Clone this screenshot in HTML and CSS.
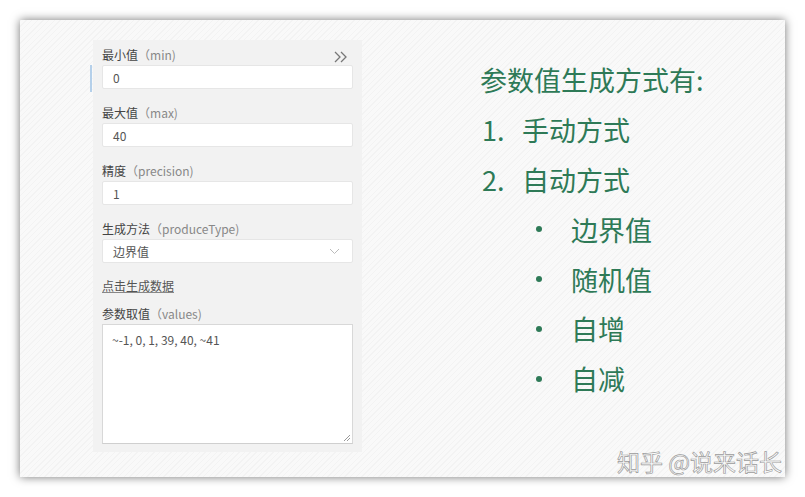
FILE: index.html
```html
<!DOCTYPE html>
<html lang="zh-CN">
<head>
  <meta charset="UTF-8">
  <title>参数值生成方式</title>
  <link rel="stylesheet" href="styles.css">
</head>
<body>

  <div class="slide">

    <div class="panel">
      <div class="label">最小值<span class="en">（min)</span>
        <svg class="collapse" width="14" height="12" viewBox="0 0 14 12">
          <path d="M1 1 L6 6 L1 11 M7 1 L12 6 L7 11" fill="none" stroke="#777" stroke-width="1.3"/>
        </svg>
      </div>
      <div class="input focused">0</div>

      <div class="label">最大值<span class="en">（max)</span></div>
      <div class="input">40</div>

      <div class="label">精度<span class="en">（precision)</span></div>
      <div class="input">1</div>

      <div class="label">生成方法<span class="en">（produceType)</span></div>
      <div class="input select">边界值
        <svg width="11" height="7" viewBox="0 0 11 7">
          <path d="M1 1 L5.5 5.5 L10 1" fill="none" stroke="#bbb" stroke-width="1"/>
        </svg>
      </div>

      <a class="gen-link">点击生成数据</a>

      <div class="label label-values">参数取值<span class="en">（values)</span></div>
      <div class="textarea">~-1, 0, 1, 39, 40, ~41
        <svg class="grip" width="8" height="8" viewBox="0 0 8 8">
          <path d="M7 1 L1 7 M7 4 L4 7" stroke="#999" stroke-width="1"/>
        </svg>
      </div>
    </div>

    <div class="notes">
      <div class="line">参数值生成方式有:</div>
      <div class="line"><span class="num">1.</span>手动方式</div>
      <div class="line"><span class="num">2.</span>自动方式</div>
      <div class="line sub"><span class="dot"></span>边界值</div>
      <div class="line sub"><span class="dot"></span>随机值</div>
      <div class="line sub"><span class="dot"></span>自增</div>
      <div class="line sub"><span class="dot"></span>自减</div>
    </div>

    <div class="watermark">知乎 @说来话长</div>
  </div>

</body>
</html>
```

FILE: styles.css
```css
body {
  margin: 0;
  padding: 20px;
  background: #ffffff;
  font-family: "Noto Sans CJK SC", "Noto Sans", sans-serif;
}
.slide {
  position: relative;
  width: 765px;
  height: 457px;
  display: flex;
  box-shadow: 0 0 9px rgba(0, 0, 0, 0.55);
  background-color: #f9f9f9;
  background-image: repeating-linear-gradient(-45deg, #f9f9f9 0, #f9f9f9 3px, #f3f3f3 3px, #f3f3f3 4px);
}
.panel {
  position: relative;
  width: 251px;
  height: 401px;
  margin: 20px 0 0 73px;
  padding: 4px 9px 7px 9px;
  background: #f2f2f2;
}
.label {
  display: flex;
  align-items: center;
  height: 21px;
  font-size: 12px;
  color: #444;
}
.en {
  color: #888;
}
.collapse {
  margin-left: auto;
  margin-right: 5px;
  margin-top: 4px;
}
.input {
  display: flex;
  align-items: center;
  box-sizing: border-box;
  height: 24px;
  margin-bottom: 13px;
  padding-left: 10px;
  padding-right: 12px;
  background: #ffffff;
  border: 1px solid #e6e6e6;
  border-radius: 2px;
  font-size: 12px;
  color: #555;
}
.focused::before {
  content: "";
  position: absolute;
  left: -3px;
  top: 25px;
  width: 2px;
  height: 27px;
  background: #b5d0ea;
}
.select {
  justify-content: space-between;
  margin-bottom: 0;
}
.gen-link {
  display: block;
  margin-top: 12px;
  height: 21px;
  line-height: 21px;
  font-size: 12px;
  color: #555;
  text-decoration: underline;
  text-decoration-color: #888;
}
.label-values {
  margin-top: 7px;
}
.textarea {
  position: relative;
  box-sizing: border-box;
  height: 120px;
  padding: 6px 9px;
  background: #ffffff;
  border: 1px solid #d8d8d8;
  border-bottom-color: #cfcfcf;
  font-size: 12px;
  color: #555;
}
.grip {
  position: absolute;
  right: 1px;
  bottom: 1px;
}
.notes {
  margin-left: 118px;
  padding-top: 35px;
  color: #2e7a57;
  font-size: 27px;
}
.line {
  display: flex;
  align-items: center;
  height: 49.8px;
}
.num {
  width: 40px;
  padding-left: 2px;
}
.sub {
  padding-left: 56px;
}
.dot {
  width: 6px;
  height: 6px;
  margin-right: 29px;
  border-radius: 50%;
  background: #2e7a57;
}
.watermark {
  position: absolute;
  right: 3px;
  bottom: 3px;
  font-size: 23px;
  line-height: 26px;
  color: #fdfdfd;
  -webkit-text-stroke: 0.7px #9a9a9a;
}
```
